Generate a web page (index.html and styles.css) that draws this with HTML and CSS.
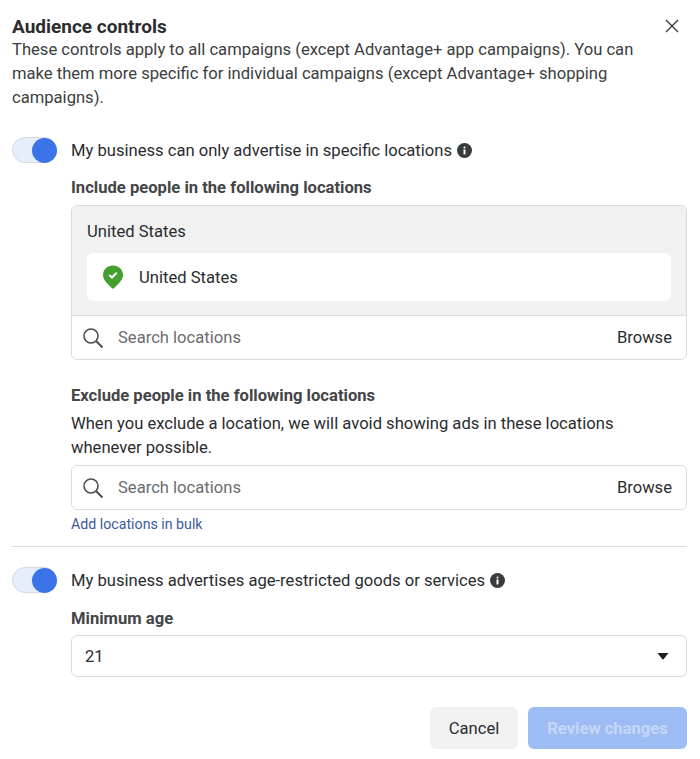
FILE: index.html
```html
<!DOCTYPE html>
<html lang="en">
<head>
    <meta charset="UTF-8">
    <title>Audience controls</title>
    <link rel="stylesheet" href="styles.css">
</head>
<body>
    <div class="dialog">
        <div class="header">
            <h1 class="title">Audience controls</h1>
            <svg class="close" width="16" height="16" viewBox="0 0 16 16"><path d="M2 2L14 14M14 2L2 14" stroke="#3a3b3d" stroke-width="1.4" fill="none"/></svg>
        </div>
        <p class="intro">These controls apply to all campaigns (except Advantage+ app campaigns). You can make them more specific for individual campaigns (except Advantage+ shopping campaigns).</p>

        <div class="toggle-row first">
            <span class="toggle"><span class="knob"></span></span>
            <span class="toggle-label">My business can only advertise in specific locations</span>
            <svg class="info" width="15" height="15" viewBox="0 0 15 15"><circle cx="7.5" cy="7.5" r="7.5" fill="#3a3b3d"/><rect x="6.5" y="6.4" width="2" height="5" fill="#fff"/><rect x="6.5" y="3.4" width="2" height="2" rx="1" fill="#fff"/></svg>
        </div>

        <div class="section">
            <h2 class="label include-label">Include people in the following locations</h2>
            <div class="box">
                <div class="selected">
                    <div class="country">United States</div>
                    <div class="chip">
                        <svg class="pin" width="20" height="24" viewBox="0 0 20 24"><path d="M10 .5C15.500 .5 20 4.500 20 10C20 15.500 14 20 11.300 23Q10 24 8.700 23C6 20 0 15.500 0 10C0 4.500 4.500 .5 10 .5Z" fill="#43a02f"/><path d="M6.300 10L9 12.500L13.700 7.800" stroke="#fff" stroke-width="2" fill="none"/></svg>
                        <span>United States</span>
                    </div>
                </div>
                <div class="search">
                    <svg class="search-icon" width="22" height="22" viewBox="0 0 22 22"><circle cx="9" cy="9" r="7" stroke="#4b4c4f" stroke-width="1.6" fill="none"/><path d="M14 14L20.500 20.500" stroke="#4b4c4f" stroke-width="2" fill="none"/></svg>
                    <span class="placeholder">Search locations</span>
                    <span class="browse">Browse</span>
                </div>
            </div>

            <h2 class="label exclude-label">Exclude people in the following locations</h2>
            <p class="hint">When you exclude a location, we will avoid showing ads in these locations whenever possible.</p>
            <div class="box">
                <div class="search">
                    <svg class="search-icon" width="22" height="22" viewBox="0 0 22 22"><circle cx="9" cy="9" r="7" stroke="#4b4c4f" stroke-width="1.6" fill="none"/><path d="M14 14L20.500 20.500" stroke="#4b4c4f" stroke-width="2" fill="none"/></svg>
                    <span class="placeholder">Search locations</span>
                    <span class="browse">Browse</span>
                </div>
            </div>
            <a class="bulk" href="#">Add locations in bulk</a>
        </div>

        <hr class="divider">

        <div class="toggle-row">
            <span class="toggle"><span class="knob"></span></span>
            <span class="toggle-label">My business advertises age-restricted goods or services</span>
            <svg class="info" width="15" height="15" viewBox="0 0 15 15"><circle cx="7.5" cy="7.5" r="7.5" fill="#3a3b3d"/><rect x="6.5" y="6.4" width="2" height="5" fill="#fff"/><rect x="6.5" y="3.4" width="2" height="2" rx="1" fill="#fff"/></svg>
        </div>

        <div class="section">
            <h2 class="label age-label">Minimum age</h2>
            <div class="select">
                <span>21</span>
                <svg width="12" height="8" viewBox="0 0 12 8"><path d="M.5 1H11.500L6.800 7Q6 7.800 5.200 7Z" fill="#1c1d1f"/></svg>
            </div>
        </div>

        <div class="footer">
            <button class="btn cancel">Cancel</button>
            <button class="btn review">Review changes</button>
        </div>
    </div>
</body>
</html>
```

FILE: styles.css
```css
* {
    box-sizing: border-box;
}

body {
    margin: 0;
    background-color: white;
    font-family: Roboto, "Liberation Sans", sans-serif;
    font-size: 16.6px;
    color: #2b2c2e;
}

.dialog {
    padding: 14px 13px 0 12px;
}

.header {
    display: flex;
    justify-content: space-between;
    align-items: center;
    height: 24px;
}

.title {
    margin: 0;
    font-size: 19px;
    font-weight: 700;
    color: #2b2c2e;
}

.close {
    margin-right: 7px;
}

.intro {
    margin: 0;
    padding-right: 30px;
    line-height: 24px;
    color: #3c3d40;
}

.toggle-row {
    display: flex;
    align-items: center;
    height: 26px;
}

.toggle-row.first {
    margin-top: 27px;
}

.toggle {
    display: flex;
    justify-content: flex-end;
    width: 45px;
    height: 26px;
    margin-right: 14px;
    background-color: #e7eefb;
    border: 1px solid #d4d8df;
    border-radius: 13px;
}

.knob {
    width: 25px;
    height: 25px;
    margin: -.5px -1px 0 0;
    background-color: #3b74e8;
    border-radius: 50%;
}

.info {
    margin-left: 5px;
}

.section {
    margin-left: 59px;
}

.label {
    margin: 0;
    font-size: 16.6px;
    line-height: 24px;
    font-weight: 700;
    color: #444547;
}

.include-label {
    margin-top: 13px;
    margin-bottom: 5px;
}

.exclude-label {
    margin-top: 24px;
}

.age-label {
    margin-top: 14px;
    margin-bottom: 4px;
}

.hint {
    margin: 4px 0 5px 0;
    line-height: 24px;
}

.box {
    border: 1px solid #dadbdd;
    border-radius: 6px;
    overflow: hidden;
}

.selected {
    padding: 14px 15px 14px 15px;
    background-color: #f1f1f2;
    border-bottom: 1px solid #dadbdd;
}

.country {
    line-height: 24px;
    margin-bottom: 9px;
}

.chip {
    display: flex;
    align-items: center;
    height: 48px;
    padding-left: 16px;
    background-color: white;
    border-radius: 6px;
}

.pin {
    margin-right: 16px;
}

.search {
    display: flex;
    align-items: center;
    height: 43px;
    padding: 0 14px 0 10px;
}

.search-icon {
    margin-right: 14px;
}

.placeholder {
    flex: 1;
    color: #6a6c70;
}

.bulk {
    display: block;
    margin-top: 4px;
    font-size: 14.2px;
    line-height: 20px;
    color: #3b5a9a;
    text-decoration: none;
}

.divider {
    margin: 12px 0 20px 0;
    border: none;
    border-top: 1px solid #dadbdd;
}

.select {
    display: flex;
    justify-content: space-between;
    align-items: center;
    height: 42px;
    padding: 0 17px 0 13px;
    border: 1px solid #dadbdd;
    border-radius: 6px;
}

.footer {
    display: flex;
    justify-content: flex-end;
    gap: 10px;
    margin-top: 30px;
}

.btn {
    height: 42px;
    border: none;
    border-radius: 6px;
    font-family: Roboto, "Liberation Sans", sans-serif;
    font-size: 16.6px;
}

.cancel {
    width: 88px;
    background-color: #f1f1f2;
    color: #2b2c2e;
}

.review {
    width: 159px;
    background-color: #9dbcf3;
    color: #c5d7f8;
    font-weight: 700;
}
```
